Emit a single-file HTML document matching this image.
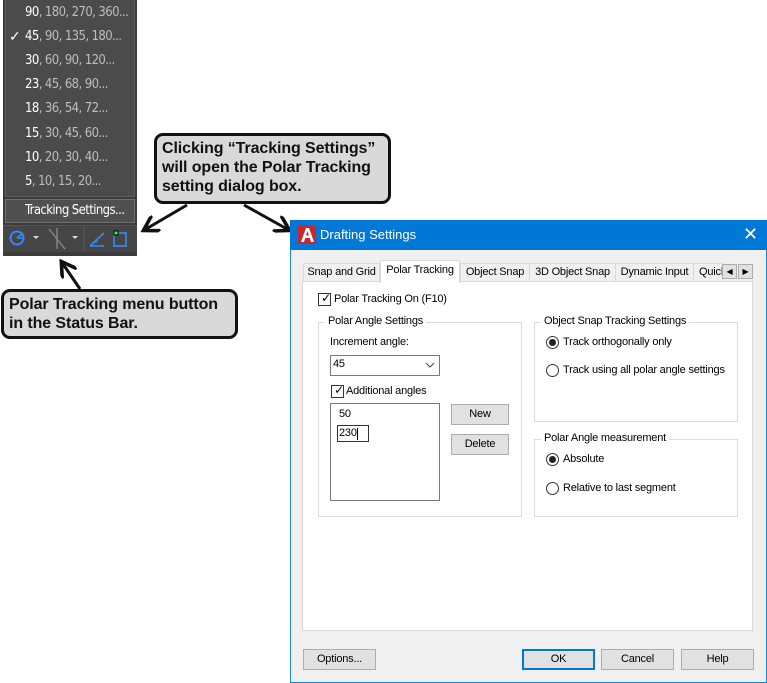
<!DOCTYPE html>
<html><head><style>
*{margin:0;padding:0;box-sizing:border-box}
body{width:767px;height:683px;background:#fff;position:relative;overflow:hidden;font-family:"Liberation Sans",sans-serif}
.a{position:absolute}
.mi{position:absolute;left:25px;font-size:13px;color:#bdbdbd;font-family:"DejaVu Sans Condensed","Liberation Sans",sans-serif;letter-spacing:-0.6px}
.mi b{color:#fff;font-weight:normal}
.call{position:absolute;background:#d9d9d9;border:3px solid #111;border-radius:9px;font-family:"Liberation Sans",sans-serif;font-weight:bold;font-size:16px;line-height:19px;color:#111;padding:3px 5px;letter-spacing:-0.1px;white-space:nowrap}
.t{position:absolute;font-size:11px;letter-spacing:-0.2px;color:#000;font-family:"Liberation Sans",sans-serif;white-space:nowrap}
.cb{position:absolute;width:13px;height:13px;border:1px solid #333;background:#fff}
.rd{position:absolute;width:13px;height:13px;border:1px solid #333;border-radius:50%;background:#fff}
.rd.on::after{content:"";position:absolute;left:2px;top:2px;width:7px;height:7px;border-radius:50%;background:#222}
.grp{position:absolute;border:1px solid #dcdcdc}
.gl{position:absolute;top:-8px;left:6px;background:#fff;padding:0 3px;font-size:11px;letter-spacing:-0.2px;white-space:nowrap}
.btn{position:absolute;height:21px;background:#e1e1e1;border:1px solid #adadad;font-size:11px;letter-spacing:-0.2px;text-align:center;line-height:19px}
.tab{position:absolute;top:263px;height:19px;background:#f0f0f0;border:1px solid #d9d9d9;border-bottom:none;font-size:11px;letter-spacing:-0.2px;line-height:17px;text-align:center;white-space:nowrap;overflow:hidden}
</style></head><body>
<!-- menu -->
<div class="a" style="left:3px;top:0;width:134px;height:256px;background:#3c3c3c"></div>
<div class="a" style="left:5px;top:0;width:130px;height:197px;background:#4b4b4b;border:1px solid #5e5e5e;border-top:none"></div>
<div class="mi" style="top:5px"><b>90</b>, 180, 270, 360...</div>
<div class="mi" style="top:29px"><b>45</b>, 90, 135, 180...</div>
<div class="a" style="left:9px;top:28px;color:#fff;font-size:14px">✓</div>
<div class="mi" style="top:53px"><b>30</b>, 60, 90, 120...</div>
<div class="mi" style="top:77px"><b>23</b>, 45, 68, 90...</div>
<div class="mi" style="top:101px"><b>18</b>, 36, 54, 72...</div>
<div class="mi" style="top:126px"><b>15</b>, 30, 45, 60...</div>
<div class="mi" style="top:150px"><b>10</b>, 20, 30, 40...</div>
<div class="mi" style="top:174px"><b>5</b>, 10, 15, 20...</div>
<div class="a" style="left:5px;top:199px;width:130px;height:24px;background:#505050;border:1px solid #707070"></div>
<div class="mi" style="top:203px;color:#fff">Tracking Settings...</div>
<div class="a" style="left:3px;top:225px;width:134px;height:27px;background:#464646;border-top:1px solid #555"></div>
<svg class="a" style="left:3px;top:225px" width="134" height="28">
<circle cx="14" cy="13" r="6.5" fill="none" stroke="#2f8cff" stroke-width="2"/><path d="M14 13 L20 8 M14 13 L21 13" stroke="#2f8cff" stroke-width="1.6"/>
<path d="M30 11 h6 l-3 3z" fill="#ddd"/>
<path d="M46 4 L62 24 M54 3 V24" stroke="#888" stroke-width="1.4"/>
<path d="M69 11 h6 l-3 3z" fill="#ddd"/>
<line x1="81" y1="2" x2="81" y2="25" stroke="#5a5a5a"/>
<path d="M87 21 L101 8 M87 21 H101" stroke="#2f8cff" stroke-width="1.6"/><circle cx="93" cy="16" r="1.6" fill="#2f8cff"/>
<rect x="111" y="8" width="12" height="13" fill="none" stroke="#2f8cff" stroke-width="1.6"/><rect x="111" y="6" width="4" height="4" fill="#3f3" stroke="#000"/>
</svg>
<!-- callouts -->
<div class="call" style="left:154px;top:133px;width:237px;height:71px">Clicking “Tracking Settings”<br>will open the Polar Tracking<br>setting dialog box.</div>
<div class="call" style="left:1px;top:289px;width:237px;height:50px">Polar Tracking menu button<br>in the Status Bar.</div>
<svg class="a" style="left:0;top:0" width="300" height="300">
<defs><marker id="h" markerWidth="6" markerHeight="6" refX="4" refY="3" orient="auto"><path d="M0,0 L5,3 L0,6" fill="none" stroke="#111" stroke-width="1.2"/></marker></defs>
<line x1="187" y1="205" x2="146" y2="229" stroke="#111" stroke-width="3" marker-end="url(#h)"/>
<line x1="244" y1="205" x2="287" y2="229" stroke="#111" stroke-width="3" marker-end="url(#h)"/>
<line x1="80" y1="289" x2="63" y2="264" stroke="#111" stroke-width="3" marker-end="url(#h)"/>
</svg>
<!-- dialog -->
<div class="a" style="left:290px;top:220px;width:477px;height:463px;background:#f0f0f0;border:1px solid #1883d7"></div>
<div class="a" style="left:290px;top:220px;width:477px;height:30px;background:#0078d7"></div>
<svg class="a" style="left:298px;top:226px" width="18" height="18"><rect width="18" height="18" fill="#c8282d"/><path d="M3 16 L8 2 H11 L16 16 H13 L11.8 12 H7.2 L6 16Z M8 9.5 H11 L9.5 5Z" fill="#fff"/></svg>
<div class="t" style="left:320px;top:227px;color:#fff;font-size:13px;letter-spacing:0">Drafting Settings</div>
<div class="t" style="left:743px;top:224px;color:#fff;font-size:18px">✕</div>
<div class="tab" style="left:303px;width:77px">Snap and Grid</div>
<div class="tab" style="left:460px;width:70px">Object Snap</div>
<div class="tab" style="left:529px;width:87px">3D Object Snap</div>
<div class="tab" style="left:615px;width:79px">Dynamic Input</div>
<div class="tab" style="left:693px;width:30px;text-align:left;padding-left:5px">Quick</div>
<div class="a" style="left:302px;top:281px;width:451px;height:350px;background:#fff;border:1px solid #d9d9d9"></div>
<div class="tab" style="left:380px;top:260px;width:80px;height:23px;background:#fff;border-color:#d9d9d9;line-height:19px">Polar Tracking</div>
<div class="btn" style="left:722px;top:264px;width:15px;height:15px;line-height:13px;font-size:8px">◀</div>
<div class="btn" style="left:738px;top:264px;width:15px;height:15px;line-height:13px;font-size:8px">▶</div>
<div class="cb" style="left:318px;top:293px"></div><div class="t" style="left:318px;top:291px;font-size:12px">&nbsp;✓</div>
<div class="t" style="left:334px;top:293px">Polar Tracking On (F10)</div>
<div class="grp" style="left:318px;top:322px;width:204px;height:195px"><div class="gl">Polar Angle Settings</div></div>
<div class="t" style="left:330px;top:336px">Increment angle:</div>
<div class="a" style="left:330px;top:355px;width:110px;height:21px;border:1px solid #7a7a7a;background:#fff"></div>
<div class="t" style="left:333px;top:358px">45</div>
<svg class="a" style="left:425px;top:362px" width="10" height="6"><path d="M1 1 L5 5 L9 1" fill="none" stroke="#444"/></svg>
<div class="cb" style="left:331px;top:385px"></div><div class="t" style="left:331px;top:383px;font-size:12px">&nbsp;✓</div>
<div class="t" style="left:346px;top:385px">Additional angles</div>
<div class="a" style="left:330px;top:403px;width:110px;height:98px;border:1px solid #7a7a7a;background:#fff"></div>
<div class="t" style="left:339px;top:408px">50</div>
<div class="a" style="left:337px;top:425px;width:32px;height:17px;border:1px solid #333"></div>
<div class="t" style="left:339px;top:427px">230</div>
<div class="a" style="left:357px;top:428px;width:1px;height:12px;background:#000"></div>
<div class="btn" style="left:451px;top:404px;width:58px">New</div>
<div class="btn" style="left:451px;top:434px;width:58px">Delete</div>
<div class="grp" style="left:534px;top:322px;width:204px;height:100px"><div class="gl">Object Snap Tracking Settings</div></div>
<div class="rd on" style="left:546px;top:336px"></div><div class="t" style="left:563px;top:336px">Track orthogonally only</div>
<div class="rd" style="left:546px;top:364px"></div><div class="t" style="left:563px;top:364px">Track using all polar angle settings</div>
<div class="grp" style="left:534px;top:439px;width:204px;height:78px"><div class="gl">Polar Angle measurement</div></div>
<div class="rd on" style="left:546px;top:453px"></div><div class="t" style="left:563px;top:453px">Absolute</div>
<div class="rd" style="left:546px;top:482px"></div><div class="t" style="left:563px;top:482px">Relative to last segment</div>
<div class="btn" style="left:303px;top:649px;width:73px">Options...</div>
<div class="btn" style="left:522px;top:649px;width:73px;border:2px solid #0078d7;line-height:17px">OK</div>
<div class="btn" style="left:601px;top:649px;width:73px">Cancel</div>
<div class="btn" style="left:681px;top:649px;width:73px">Help</div>
</body></html>
